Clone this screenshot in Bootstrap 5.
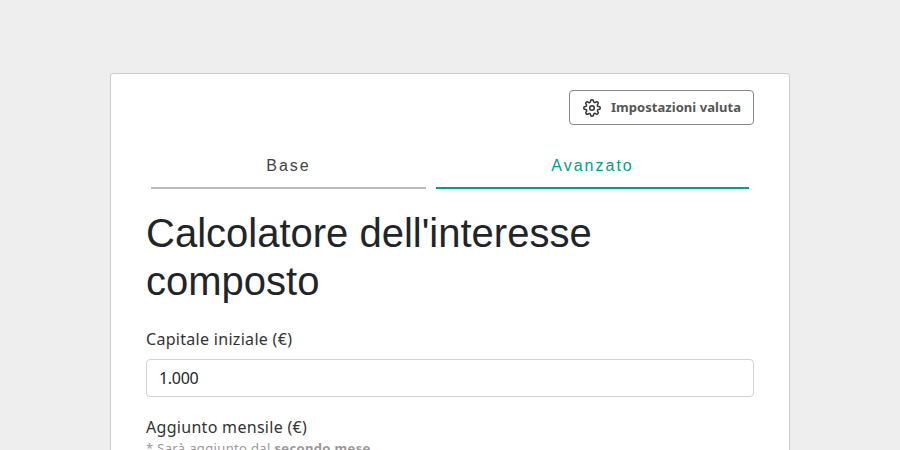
<!DOCTYPE html>
<html lang="it">
<head>
<meta charset="utf-8">
<title>Calcolatore dell'interesse composto</title>
<link rel="stylesheet" href="https://cdn.jsdelivr.net/npm/bootstrap@5.3.0/dist/css/bootstrap.min.css">
<style>
html,body{height:100%;overflow:hidden}
body{background:#eee;font-family:"Noto Sans",sans-serif;color:#333;padding-top:73px}
.calc-card{width:680px;margin:0 auto;border-color:#ccc;border-radius:3px;padding:16px 35px 0}
.currency-btn{font-family:"Noto Sans",sans-serif;font-size:13px;font-weight:700;letter-spacing:.05px;color:#555;border:1px solid #888;border-radius:4px;padding:0 12px 0 13px;height:35px;background:#fff}
.currency-btn svg{width:18px;height:18px;margin-right:10px;color:#333}
.tab-row{margin-top:29px;gap:0}
.tab-link{flex:1 1 auto;margin:0 5px;text-align:center;font-family:"Liberation Sans",sans-serif;font-size:16px;letter-spacing:2px;line-height:24px;color:#444;padding:0 0 9px;border-bottom:2px solid #bbb;text-decoration:none}
.tab-link.tab-on{color:#00a085;border-bottom-color:#00a085}
.calc-title{font-family:"Liberation Sans",sans-serif;font-size:40px;font-weight:400;line-height:48px;color:#212529;margin:20px 0 0}
.field-label{font-size:16px;line-height:24px;color:#333;letter-spacing:.3px;margin:0 0 8px;display:block}
.field-input{height:38px;font-size:16px;border-color:#ced4da;color:#212529;font-family:"Noto Sans",sans-serif;letter-spacing:-.3px;padding:6px 12px;border-radius:4px}
.first-field{margin-top:22px}
.next-field{margin-top:18px}
.next-field .field-label{margin:0}
.field-note{font-size:13px;line-height:18px;color:#999;letter-spacing:.35px;margin:0}
</style>
</head>
<body>
<main class="card calc-card">
  <div class="d-flex justify-content-end">
    <button type="button" class="btn currency-btn d-inline-flex align-items-center">
      <svg viewBox="0 0 24 24" fill="none" stroke="currentColor" stroke-width="2" stroke-linecap="round" stroke-linejoin="round" aria-hidden="true"><circle cx="12" cy="12" r="3"/><path d="M19.4 15a1.65 1.65 0 0 0 .33 1.82l.06.06a2 2 0 1 1-2.83 2.83l-.06-.06a1.65 1.65 0 0 0-2.82 1.17V21a2 2 0 1 1-4 0v-.09a1.65 1.65 0 0 0-2.82-1.17l-.06.06a2 2 0 1 1-2.83-2.83l.06-.06A1.65 1.65 0 0 0 3.09 14H3a2 2 0 1 1 0-4h.09a1.65 1.65 0 0 0 1.17-2.82l-.06-.06a2 2 0 1 1 2.83-2.83l.06.06A1.65 1.65 0 0 0 10 3.09V3a2 2 0 1 1 4 0v.09a1.65 1.65 0 0 0 2.82 1.17l.06-.06a2 2 0 1 1 2.83 2.83l-.06.06A1.65 1.65 0 0 0 20.91 10H21a2 2 0 1 1 0 4h-.09a1.65 1.65 0 0 0-1.51 1z"/></svg>
      Impostazioni valuta
    </button>
  </div>
  <nav class="d-flex tab-row">
    <a class="tab-link" href="#">Base</a>
    <a class="tab-link tab-on" href="#">Avanzato</a>
  </nav>
  <h1 class="calc-title">Calcolatore dell'interesse composto</h1>
  <div class="first-field">
    <label class="field-label" for="capitale">Capitale iniziale (€)</label>
    <input id="capitale" class="form-control field-input" type="text" value="1.000">
  </div>
  <div class="next-field">
    <label class="field-label" for="mensile">Aggiunto mensile (€)</label>
    <p class="field-note">* Sarà aggiunto dal <b>secondo mese</b></p>
    <input id="mensile" class="form-control field-input mt-2" type="text" value="100">
  </div>
</main>
<script src="https://cdn.jsdelivr.net/npm/bootstrap@5.3.0/dist/js/bootstrap.bundle.min.js"></script>
</body>
</html>
